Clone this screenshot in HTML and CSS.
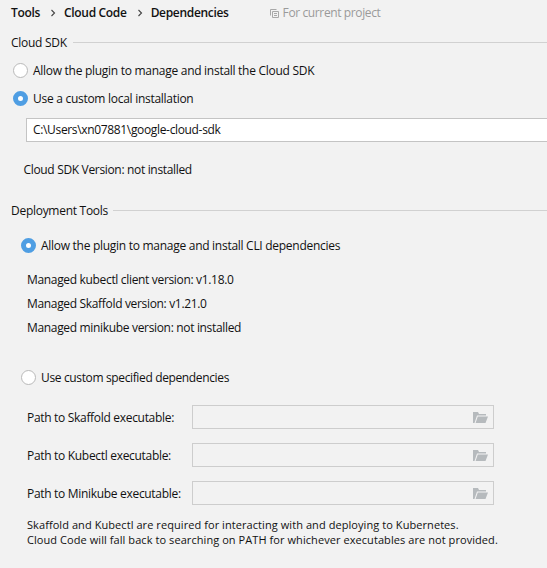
FILE: index.html
```html
<!DOCTYPE html>
<html lang="en">
<head>
<meta charset="utf-8">
<title>Dependencies</title>
<link rel="stylesheet" href="styles.css">
</head>
<body>
<header class="crumbs">
  <span class="crumb">Tools</span>
  <svg class="chev" viewBox="0 0 6 8" width="6" height="8"><path d="M1.5 1 L4.5 4 L1.5 7" fill="none" stroke="#444" stroke-width="1.1"/></svg>
  <span class="crumb">Cloud Code</span>
  <svg class="chev" viewBox="0 0 6 8" width="6" height="8"><path d="M1.5 1 L4.5 4 L1.5 7" fill="none" stroke="#444" stroke-width="1.1"/></svg>
  <span class="crumb">Dependencies</span>
  <span class="project">
    <svg viewBox="0 0 9 9" width="9" height="9"><path d="M0.5 6.5V0.5H6.5M2.5 2.5H8.5V8.5H2.5ZM4 4.5H7M4 6.5H7" fill="none" stroke="#a8a8a8" stroke-width="1"/></svg>
    For current project
  </span>
</header>

<section class="sdk">
  <h2 class="title"><span class="lbl">Cloud SDK</span></h2>
  <div class="radio-row"><span class="radio"></span><span class="lbl">Allow the plugin to manage and install the Cloud SDK</span></div>
  <div class="radio-row second"><span class="radio on"></span><span class="lbl">Use a custom local installation</span></div>
  <div class="sdk-input">C:\Users\xn07881\google-cloud-sdk</div>
  <p class="sdk-version">Cloud SDK Version: not installed</p>
</section>

<section class="deploy">
  <h2 class="title"><span class="lbl">Deployment Tools</span></h2>
  <div class="radio-row managed"><span class="radio on"></span><span class="lbl">Allow the plugin to manage and install CLI dependencies</span></div>
  <ul class="versions">
    <li>Managed kubectl client version: v1.18.0</li>
    <li>Managed Skaffold version: v1.21.0</li>
    <li>Managed minikube version: not installed</li>
  </ul>
  <div class="radio-row custom"><span class="radio"></span><span class="lbl">Use custom specified dependencies</span></div>
  <div class="paths">
    <div class="path-row"><label class="lbl">Path to Skaffold executable:</label><div class="path-input"><svg viewBox="0 0 15 11" width="15" height="11"><path d="M0 0H5L6 2H13V3.5H4L1.5 11H0Z M4.8 4.5H15L12.5 11H2.6Z" fill="#b6babd"/></svg></div></div>
    <div class="path-row"><label class="lbl">Path to Kubectl executable:</label><div class="path-input"><svg viewBox="0 0 15 11" width="15" height="11"><path d="M0 0H5L6 2H13V3.5H4L1.5 11H0Z M4.8 4.5H15L12.5 11H2.6Z" fill="#b6babd"/></svg></div></div>
    <div class="path-row"><label class="lbl">Path to Minikube executable:</label><div class="path-input"><svg viewBox="0 0 15 11" width="15" height="11"><path d="M0 0H5L6 2H13V3.5H4L1.5 11H0Z M4.8 4.5H15L12.5 11H2.6Z" fill="#b6babd"/></svg></div></div>
  </div>
  <p class="note">Skaffold and Kubectl are required for interacting with and deploying to Kubernetes.<br>Cloud Code will fall back to searching on PATH for whichever executables are not provided.</p>
</section>
</body>
</html>
```

FILE: styles.css
```css
* { box-sizing: border-box; }
html, body { margin: 0; padding: 0; height: 100%; overflow: hidden; }
body {
  background: #f2f2f2;
  color: #111;
  font: 12px/16px "Open Sans", "Noto Sans", sans-serif;
  letter-spacing: -0.28px;
  width: 547px;
}
.lbl { padding-top: 2px; }
.crumbs {
  display: flex;
  align-items: center;
  height: 26px;
  padding-left: 11px;
}
.crumb { font-weight: 600; color: #111; letter-spacing: -0.32px; }
.chev { margin: 0 8px 0 10px; }
.project { display: flex; align-items: center; gap: 4px; margin-left: 41px; color: #9a9a9a; letter-spacing: -0.38px; }
.title {
  display: flex;
  align-items: center;
  gap: 6px;
  margin: 0;
  padding-left: 11px;
  font: inherit;
  height: 16px;
}
.title::after { content: ""; flex: 1; height: 1px; background: #d1d1d1; }
.sdk { padding-top: 8px; }
.radio-row { display: flex; align-items: center; height: 16px; }
.radio {
  width: 15px;
  height: 15px;
  border-radius: 50%;
  background: #fff;
  border: 1px solid #b9b9b9;
  margin-right: 5px;
  flex: none;
}
.radio.on {
  border: 5px solid #4f9ee3;
}
.sdk .radio-row { padding-left: 13px; margin-top: 12px; }
.sdk .radio-row.second { margin-top: 12px; }
.sdk-input {
  margin: 12px 0 0 26px;
  height: 24px;
  background: #fff;
  border: 1px solid #c4c4c4;
  border-right: 0;
  padding: 3px 6px;
  letter-spacing: -0.34px;
}
.sdk-version { margin: 20px 0 0 23.5px; letter-spacing: -0.33px; }
.deploy { padding-top: 24px; }
.deploy .radio-row { padding-left: 21px; }
.deploy .title { gap: 5px; }
.managed { margin-top: 19px; }
.versions { list-style: none; margin: 19px 0 0; padding: 0 0 0 27px; display: flex; flex-direction: column; gap: 8px; letter-spacing: -0.33px; }
.custom { margin-top: 33px; letter-spacing: -0.36px; }
.paths { margin-top: 20px; padding-left: 27px; display: flex; flex-direction: column; gap: 14px; letter-spacing: -0.31px; }
.path-row { display: flex; align-items: center; }
.path-row label { width: 165px; }
.path-input {
  width: 302px;
  height: 24px;
  border: 1px solid #cdcdcd;
  display: flex;
  align-items: center;
  justify-content: flex-end;
  padding-right: 5px;
}
.note { margin: 12px 0 0 27px; font-size: 11px; line-height: 15px; letter-spacing: 0.07px; white-space: nowrap; }
```
